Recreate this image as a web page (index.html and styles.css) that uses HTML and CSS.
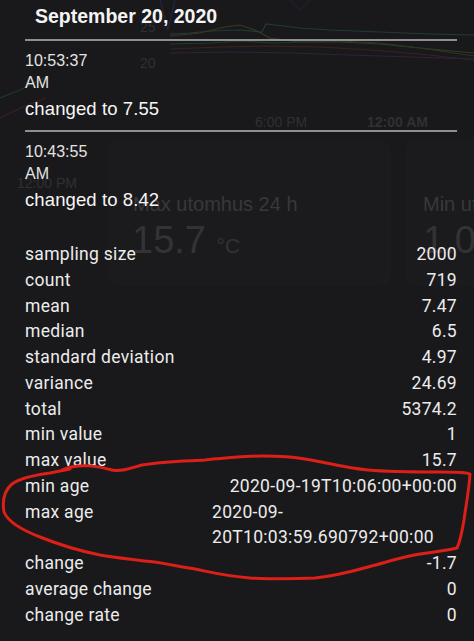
FILE: index.html
```html
<!DOCTYPE html>
<html>
<head>
<meta charset="utf-8">
<link rel="stylesheet" href="styles.css">
</head>
<body>
<div class="screen">
  <div class="backdrop" aria-hidden="true">
    <svg class="bg-chart" width="474" height="130" viewBox="0 0 474 130">
      <path d="M160 0 L168 30 L176 -5" stroke="#22223a" stroke-width="1.5" fill="none"/>
      <path d="M290 0 L300 10 L310 0" stroke="#1e1e30" stroke-width="1.5" fill="none"/>
      <path d="M170 34 L190 33 L210 31 L240 30 L262 32 L266 24 L275 25 L300 28 L330 30 L380 32 L430 34 L474 35" stroke="#233a38" stroke-width="1.2" fill="none"/>
      <path d="M170 36 L200 33 L225 27 L240 25 L255 30 L270 38 L300 42 L340 42 L380 44 L420 48 L474 53" stroke="#3a3822" stroke-width="1.2" fill="none"/>
      <path d="M170 44 L210 43 L240 41 L275 43 L300 42 L340 41 L380 43 L420 48 L474 56" stroke="#233a24" stroke-width="1.2" fill="none"/>
      <path d="M170 49 L220 47 L270 46 L320 47 L370 50 L420 54 L474 60" stroke="#3a2222" stroke-width="1.2" fill="none"/>
      <path d="M170 53 L230 52 L290 53 L350 55 L410 57 L474 59" stroke="#30223a" stroke-width="1.2" fill="none"/>
      <path d="M0 98 L20 90 L48 76" stroke="#22362f" stroke-width="1.2" fill="none"/>
      <path d="M0 118 L25 106 L46 98" stroke="#3a2020" stroke-width="1.2" fill="none"/>
    </svg>
    <span class="bg-label y25">25</span>
    <span class="bg-label y20">20</span>
    <span class="bg-label x6pm">6:00 PM</span>
    <span class="bg-label x12am">12:00 AM</span>
    <span class="bg-label x12pm">12:00 PM</span>
    <div class="bg-card card-a"></div>
    <div class="bg-card card-b"></div>
    <span class="bg-title t-a">Max utomhus 24 h</span>
    <span class="bg-value v-a">15.7 <small>°C</small></span>
    <span class="bg-title t-b">Min utomhus</span>
    <span class="bg-value v-b">1.0</span>
  </div>

  <div class="panel">
    <div class="date">September 20, 2020</div>
    <div class="rule"></div>
    <div class="entry">
      <div class="time">10:53:37 AM</div>
      <div class="change-text">changed to 7.55</div>
    </div>
    <div class="rule"></div>
    <div class="entry">
      <div class="time">10:43:55 AM</div>
      <div class="change-text">changed to 8.42</div>
    </div>

    <div class="stats">
      <div class="label">sampling size</div><div class="value">2000</div>
      <div class="label">count</div><div class="value">719</div>
      <div class="label">mean</div><div class="value">7.47</div>
      <div class="label">median</div><div class="value">6.5</div>
      <div class="label">standard deviation</div><div class="value">4.97</div>
      <div class="label">variance</div><div class="value">24.69</div>
      <div class="label">total</div><div class="value">5374.2</div>
      <div class="label">min value</div><div class="value">1</div>
      <div class="label">max value</div><div class="value">15.7</div>
      <div class="label">min age</div><div class="value">2020-09-19T10:06:00+00:00</div>
      <div class="label">max age</div><div class="value wrap">2020-09-20T10:03:59.690792+00:00</div>
      <div class="label">change</div><div class="value">-1.7</div>
      <div class="label">average change</div><div class="value">0</div>
      <div class="label">change rate</div><div class="value">0</div>
    </div>
  </div>

  <svg class="annotation" width="474" height="641" viewBox="0 0 474 641" aria-hidden="true">
    <path d="M62 470 C80 462 100 467 112 470 C122 472 130 468 142 465 C165 461 190 461 205 460 C225 458 245 456 262 456 C280 456 295 457 305 459 C325 462 345 468 368 470 C390 472 420 472 440 472 C455 472 466 472 470 474 C469 490 466 505 464 520 C462 532 460 542 457 548 C445 551 432 552 420 554 C400 557 385 563 368 567 C350 572 335 576 315 578 C295 579 270 579 250 578 C225 576 210 572 195 569 C175 566 160 562 145 561 C130 559 117 558 100 555 C80 551 60 545 40 537 C22 530 8 522 4 512 C2 500 5 490 12 484 C20 478 35 475 50 473 C60 471 65 470 70 469" stroke="#dc1f17" stroke-width="3" fill="none" stroke-linecap="round" stroke-linejoin="round"/>
  </svg>
</div>
</body>
</html>
```

FILE: styles.css
```css
html, body {
  margin: 0;
  padding: 0;
  background: #19191b;
}

.screen {
  position: relative;
  width: 474px;
  height: 641px;
  overflow: hidden;
  background: #19191b;
}

/* dimmed dashboard behind the popup */
.backdrop {
  position: absolute;
  inset: 0;
  z-index: 0;
}

.bg-chart {
  position: absolute;
  left: 0;
  top: 0;
}

.bg-label {
  position: absolute;
  font-family: "Liberation Sans", Arial, sans-serif;
  font-size: 14px;
  color: #303032;
  line-height: 16px;
}

.y25 { left: 140px; top: 19px; }
.y20 { left: 140px; top: 55px; }
.x6pm { left: 255px; top: 114px; }
.x12am { left: 367px; top: 114px; font-weight: bold; }
.x12pm { left: 17px; top: 175px; }

.bg-card {
  position: absolute;
  background: #1b1b1d;
  border-radius: 10px;
}

.card-a { left: 108px; top: 140px; width: 283px; height: 146px; }
.card-b { left: 405px; top: 140px; width: 90px; height: 146px; }

.bg-title {
  position: absolute;
  font-family: "Liberation Sans", Arial, sans-serif;
  font-size: 20px;
  color: #38383a;
  line-height: 24px;
  white-space: nowrap;
}

.t-a { left: 133px; top: 192px; }
.t-b { left: 423px; top: 192px; }

.bg-value {
  position: absolute;
  font-family: "Liberation Sans", Arial, sans-serif;
  font-size: 38px;
  color: #333335;
  line-height: 40px;
  white-space: nowrap;
}

.bg-value small {
  font-size: 21px;
}

.v-a { left: 132px; top: 220px; }
.v-b { left: 423px; top: 220px; }

/* foreground popup */
.panel {
  position: relative;
  z-index: 1;
  padding: 0 17px 0 25px;
  color: #ffffff;
}

.date {
  font-family: "Liberation Sans", Arial, sans-serif;
  font-weight: bold;
  font-size: 19.5px;
  line-height: 32px;
  padding-left: 10px;
  margin-bottom: 7px;
  color: #f4f4f4;
}

.rule {
  height: 2px;
  background: #8f8f91;
}

.entry {
  padding: 9px 0 8px;
}

.time {
  font-family: "Liberation Sans", Arial, sans-serif;
  font-size: 16px;
  line-height: 22px;
  width: 72px;
  color: #e4e4e4;
}

.change-text {
  font-family: "Liberation Sans", Arial, sans-serif;
  font-size: 18.5px;
  letter-spacing: 0.1px;
  line-height: 26px;
  margin-top: 2px;
  color: #f6f6f6;
}

.stats {
  display: grid;
  grid-template-columns: 187px 1fr;
  margin-top: 21px;
  font-family: Roboto, "Liberation Sans", sans-serif;
  font-size: 17.5px;
  letter-spacing: 0.3px;
  line-height: 25.76px;
  color: #ececec;
}

.value {
  text-align: right;
}

.value.wrap {
  text-align: left;
  word-break: normal;
  overflow-wrap: anywhere;
}

.annotation {
  position: absolute;
  left: 0;
  top: 0;
  z-index: 2;
  pointer-events: none;
}
```
